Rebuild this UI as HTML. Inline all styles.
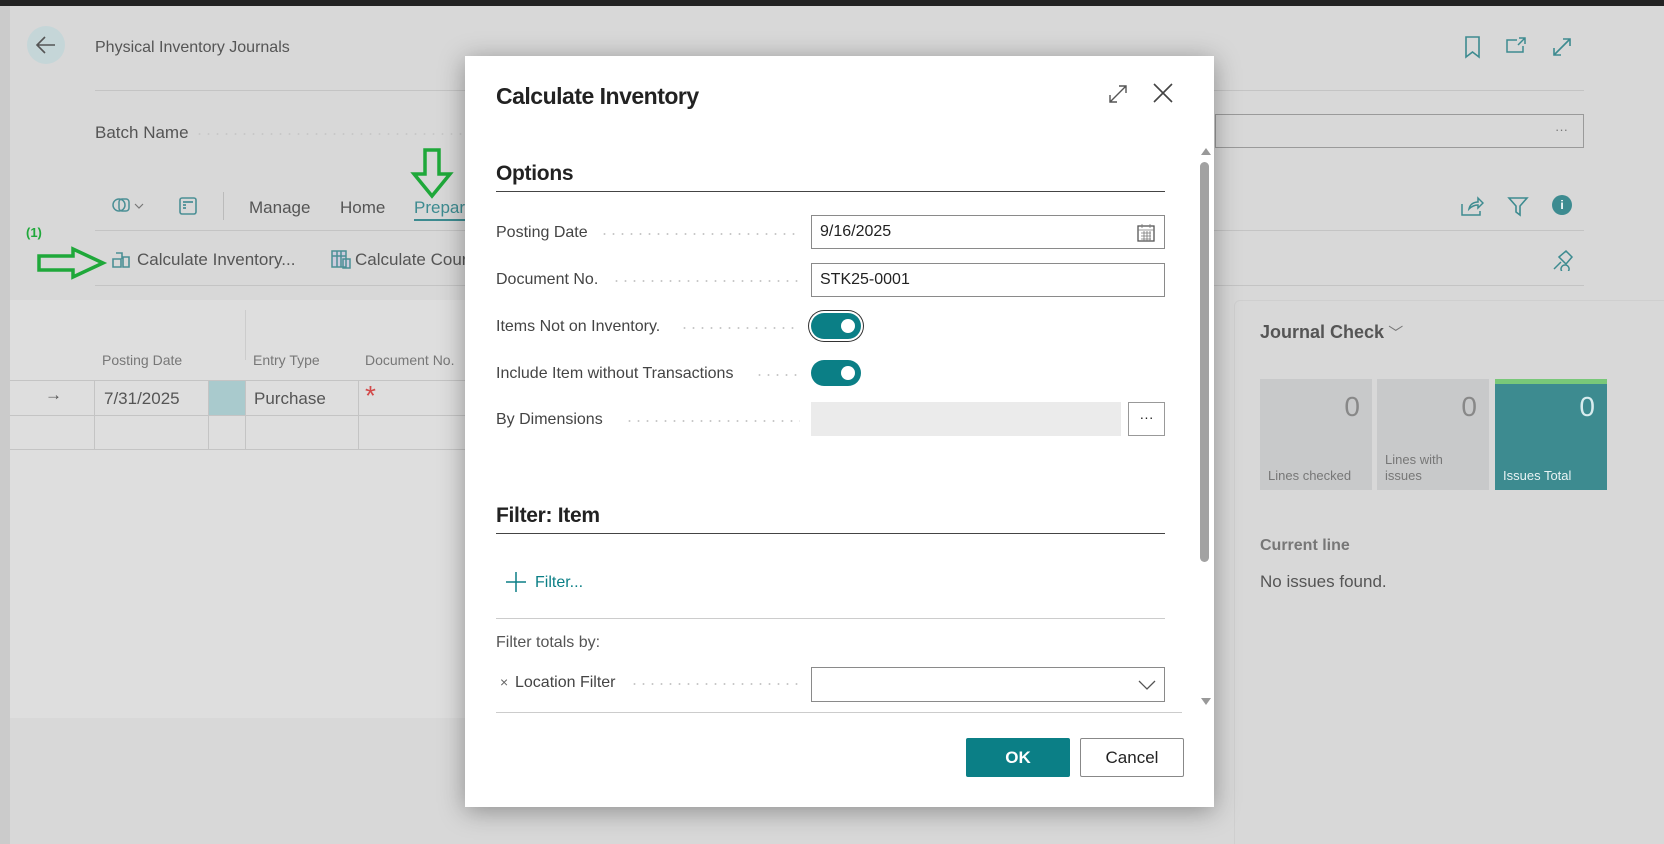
<!DOCTYPE html>
<html><head><meta charset="utf-8"><style>
*{margin:0;padding:0;box-sizing:border-box}
body{width:1664px;height:844px;overflow:hidden;background:#d8d8d8;font-family:"Liberation Sans",sans-serif;position:relative;color:#444}
.a{position:absolute;white-space:nowrap}
.bg{color:#555;font-size:16px}
.hl{position:absolute;height:1px;background:#c4c4c4}
.lbl{position:absolute;left:31px;font-size:16px;color:#444;white-space:nowrap}
.dots{position:absolute;height:2px;background-image:radial-gradient(circle,#c8c8c8 0.9px,transparent 1.1px);background-size:9px 2px}
.inp{position:absolute;left:346px;width:354px;height:34px;border:1px solid #8a8a8a;background:#fff;font-size:16px;color:#222;padding:7px 8px}
.tg{position:absolute;left:346px;width:50px;height:26px;border-radius:13px;background:#0b7f86}
.tg:after{content:"";position:absolute;right:6px;top:6px;width:14px;height:14px;border-radius:50%;background:#fff}
.tile{position:absolute;top:379px;width:112px;height:111px;background:#c8c9ca;color:#777}
.tile .n{position:absolute;right:12px;top:12px;font-size:28px;color:#888}
.tile .t{position:absolute;left:8px;bottom:6px;width:90px;font-size:13px;line-height:16px;white-space:normal}
</style></head><body>
<div class="a" style="left:0;top:0;width:1664px;height:6px;background:#222"></div>
<div class="a" style="left:0;top:6px;width:10px;height:838px;background:#cbcbcb"></div>
<div class="a" style="left:10px;top:300px;width:455px;height:418px;background:#dedede"></div>
<!-- header -->
<div class="a" style="left:27px;top:26px;width:38px;height:38px;border-radius:50%;background:#c5d6d8"></div>
<svg class="a" style="left:35px;top:34px" width="22" height="22" viewBox="0 0 22 22"><path d="M20 11H3M10 3L2 11l8 8" fill="none" stroke="#555" stroke-width="1.6"/></svg>
<div class="a bg" style="left:95px;top:39px">Physical Inventory Journals</div>
<div class="hl" style="left:95px;top:90px;width:1489px"></div>
<div class="a bg" style="left:95px;top:123px;font-size:17px">Batch Name</div>
<div class="dots" style="left:195px;top:133px;width:270px"></div>
<div class="a" style="left:1215px;top:114px;width:369px;height:34px;border:1px solid #9a9a9a"></div>
<div class="a" style="left:1555px;top:122px;color:#777;font-size:13px">···</div>
<!-- top right icons -->
<svg class="a" style="left:1463px;top:35px" width="20" height="24"><path d="M3 2h13v20l-6.5-5L3 22z" fill="none" stroke="#3d8b90" stroke-width="1.6"/></svg>
<svg class="a" style="left:1505px;top:36px" width="22" height="18"><path d="M12 4H2v12h16v-6M14 2h6v6M20 2l-7 7" fill="none" stroke="#3d8b90" stroke-width="1.5"/></svg>
<svg class="a" style="left:1551px;top:36px" width="22" height="22"><path d="M3 19L19 3M12 3h7v7M3 12v7h7" fill="none" stroke="#3d8b90" stroke-width="1.6"/></svg>
<!-- toolbar -->
<svg class="a" style="left:111px;top:196px" width="34" height="20"><circle cx="8" cy="9" r="6" fill="none" stroke="#4b8f95" stroke-width="1.5"/><rect x="8" y="3" width="10" height="12" rx="3" fill="none" stroke="#4b8f95" stroke-width="1.5"/><path d="M24 8l4 4 4-4" fill="none" stroke="#777" stroke-width="1.2"/></svg>
<svg class="a" style="left:178px;top:196px" width="20" height="20"><rect x="2" y="2" width="16" height="16" rx="2" fill="none" stroke="#4b8f95" stroke-width="1.6"/><path d="M5 6h10M5 9h3M5 12h3" stroke="#4b8f95" stroke-width="1.8"/></svg>
<div class="a" style="left:223px;top:192px;width:1px;height:28px;background:#bbb"></div>
<div class="a bg" style="left:249px;top:198px;font-size:17px">Manage</div>
<div class="a bg" style="left:340px;top:198px;font-size:17px">Home</div>
<div class="a" style="left:414px;top:198px;font-size:17px;color:#3d8b90">Prepar</div>
<div class="a" style="left:414px;top:219px;width:51px;height:2px;background:#3d8b90"></div>
<svg class="a" style="left:410px;top:148px" width="46" height="52"><path d="M15 2h14v24h11L22 48 4 26h11z" fill="none" stroke="#1fa83a" stroke-width="3.5"/></svg>
<div class="hl" style="left:95px;top:230px;width:1489px"></div>
<div class="a" style="left:26px;top:225px;color:#1fa83a;font-weight:bold;font-size:13px">(1)</div>
<svg class="a" style="left:36px;top:246px" width="72" height="34"><path d="M3 10h34V3l30 14-30 14v-7H3z" fill="none" stroke="#1fa83a" stroke-width="3.5"/></svg>
<svg class="a" style="left:111px;top:249px" width="20" height="20"><path d="M2 10h8v8H2zM5 4h6v6M12 8h6v10h-6z" fill="none" stroke="#4b8f95" stroke-width="1.6"/></svg>
<div class="a bg" style="left:137px;top:250px;font-size:17px">Calculate Inventory...</div>
<svg class="a" style="left:331px;top:249px" width="20" height="20"><path d="M1 2h14v16H1zM1 7h14M6 2v16M10 2v16M12 10h7v9h-7z" fill="#ccd" stroke="#4b8f95" stroke-width="1.5"/></svg>
<div class="a bg" style="left:355px;top:250px;font-size:17px">Calculate Cour</div>
<svg class="a" style="left:1460px;top:195px" width="24" height="22"><path d="M2 9v11h18v-4M9 14c1-5 5-7 9-7V3l5 5-5 5V10c-3 0-6 1-9 4z" fill="none" stroke="#3d8b90" stroke-width="1.5"/></svg>
<svg class="a" style="left:1507px;top:195px" width="22" height="22"><path d="M2 3h18l-7 8v9l-4-3v-6z" fill="none" stroke="#3d8b90" stroke-width="1.6"/></svg>
<div class="a" style="left:1552px;top:195px;width:20px;height:20px;border-radius:50%;background:#3d8b90;color:#fff;font-size:12px;text-align:center;line-height:20px;font-weight:bold">i</div>
<svg class="a" style="left:1551px;top:249px" width="24" height="22"><path d="M3 20l7-7M8 8l7-6 6 6-6 7zM14 16a4 4 0 1 0 .1 0" fill="none" stroke="#3d8b90" stroke-width="1.5"/></svg>
<div class="hl" style="left:95px;top:285px;width:1489px"></div>
<!-- table -->
<div class="a" style="left:245px;top:310px;width:1px;height:50px;background:#ccc"></div>
<div class="a" style="left:102px;top:352px;font-size:14px;color:#777">Posting Date</div>
<div class="a" style="left:253px;top:352px;font-size:14px;color:#777">Entry Type</div>
<div class="a" style="left:365px;top:352px;font-size:14px;color:#777">Document No.</div>
<div class="hl" style="left:10px;top:380px;width:455px"></div>
<div class="hl" style="left:10px;top:415px;width:455px"></div>
<div class="hl" style="left:10px;top:449px;width:455px"></div>
<div class="a" style="left:208px;top:381px;width:37px;height:34px;background:#a9cacd"></div>
<div class="a" style="left:94px;top:381px;width:1px;height:68px;background:#c4c4c4"></div>
<div class="a" style="left:208px;top:381px;width:1px;height:68px;background:#c4c4c4"></div>
<div class="a" style="left:245px;top:381px;width:1px;height:68px;background:#c4c4c4"></div>
<div class="a" style="left:358px;top:381px;width:1px;height:68px;background:#c4c4c4"></div>
<div class="a bg" style="left:45px;top:385px;font-size:17px">→</div>
<div class="a bg" style="left:104px;top:389px;font-size:17px">7/31/2025</div>
<div class="a bg" style="left:254px;top:389px;font-size:17px">Purchase</div>
<div class="a" style="left:365px;top:380px;font-size:28px;color:#d24a4a">*</div>
<!-- right panel -->
<div class="a" style="left:1234px;top:300px;width:430px;height:544px;border:1px solid #cfcfcf;border-right:none;border-bottom:none;border-radius:6px 0 0 0"></div>
<div class="a" style="left:1260px;top:322px;font-size:18px;font-weight:bold;color:#555">Journal Check<span style="font-weight:normal;color:#777;font-size:15px"> ﹀</span></div>
<div class="tile" style="left:1260px"><div class="n">0</div><div class="t">Lines checked</div></div>
<div class="tile" style="left:1377px"><div class="n">0</div><div class="t">Lines with issues</div></div>
<div class="tile" style="left:1495px;width:112px;background:#3d8b90;border-top:5px solid #79c879"><div class="n" style="color:#d8ecee;top:7px">0</div><div class="t" style="color:#e8f3f4">Issues Total</div></div>
<div class="a" style="left:1260px;top:537px;font-size:16px;font-weight:bold;color:#777">Current line</div>
<div class="a" style="left:1260px;top:572px;font-size:17px;color:#555">No issues found.</div>
<!-- dialog -->
<div class="a" style="left:465px;top:56px;width:749px;height:751px;background:#fff;box-shadow:0 4px 24px rgba(0,0,0,.35)">
 <div class="a" style="left:31px;top:27px;font-size:23px;font-weight:bold;color:#222;letter-spacing:-.5px">Calculate Inventory</div>
 <svg class="a" style="left:642px;top:27px" width="22" height="22"><path d="M3 19L19 3M12 3h7v7M3 12v7h7" fill="none" stroke="#555" stroke-width="1.4"/></svg>
 <svg class="a" style="left:687px;top:26px" width="22" height="22"><path d="M2 2l18 18M20 2L2 20" stroke="#444" stroke-width="1.6"/></svg>
 <div class="a" style="left:31px;top:106px;font-size:21px;font-weight:bold;color:#222;letter-spacing:-.3px">Options</div>
 <div class="a" style="left:31px;top:135px;width:669px;height:1px;background:#444"></div>
 <div class="lbl" style="top:168px">Posting Date</div><div class="dots" style="left:135px;top:177px;width:200px"></div>
 <div class="inp" style="top:159px">9/16/2025</div>
 <svg class="a" style="left:671px;top:167px" width="20" height="20"><rect x="2" y="3" width="16" height="15" fill="none" stroke="#555" stroke-width="1.3"/><path d="M2 7h16M6 1v4M14 1v4M5 10h10M5 13h10M5 16h10M8 8v10M11 8v10M14 8v10" stroke="#777" stroke-width=".8"/></svg>
 <div class="lbl" style="top:215px">Document No.</div><div class="dots" style="left:147px;top:224px;width:188px"></div>
 <div class="inp" style="top:207px">STK25-0001</div>
 <div class="lbl" style="top:262px">Items Not on Inventory.</div><div class="dots" style="left:215px;top:271px;width:120px"></div>
 <div class="tg" style="top:257px;box-shadow:0 0 0 2px #fff,0 0 0 3px #333"></div>
 <div class="lbl" style="top:309px">Include Item without Transactions</div><div class="dots" style="left:290px;top:318px;width:45px"></div>
 <div class="tg" style="top:304px"></div>
 <div class="lbl" style="top:355px">By Dimensions</div><div class="dots" style="left:160px;top:364px;width:175px"></div>
 <div class="a" style="left:346px;top:346px;width:310px;height:34px;background:#ebebeb"></div>
 <div class="a" style="left:663px;top:346px;width:37px;height:34px;border:1px solid #999;text-align:center;font-size:14px;line-height:28px;color:#222">···</div>
 <div class="a" style="left:31px;top:448px;font-size:21px;font-weight:bold;color:#222;letter-spacing:-.3px">Filter: Item</div>
 <div class="a" style="left:31px;top:477px;width:669px;height:1px;background:#444"></div>
 <svg class="a" style="left:41px;top:516px" width="20" height="20"><path d="M10 0v20M0 10h20" stroke="#0b7f86" stroke-width="1.5"/></svg>
 <div class="a" style="left:70px;top:518px;font-size:16px;color:#0b7f86">Filter...</div>
 <div class="a" style="left:31px;top:562px;width:669px;height:1px;background:#ccc"></div>
 <div class="lbl" style="top:578px;color:#555">Filter totals by:</div>
 <div class="lbl" style="top:618px;left:35px;font-size:14px;color:#666">×</div>
 <div class="lbl" style="top:618px;left:50px">Location Filter</div><div class="dots" style="left:165px;top:627px;width:170px"></div>
 <div class="inp" style="top:611px;height:35px"></div>
 <svg class="a" style="left:673px;top:623px" width="18" height="12"><path d="M1 2l8 8 8-8" fill="none" stroke="#555" stroke-width="1.3"/></svg>
 <div class="a" style="left:31px;top:656px;width:686px;height:1px;background:#ccc"></div>
 <div class="a" style="left:501px;top:682px;width:104px;height:39px;background:#0b7f86;color:#fff;font-weight:bold;font-size:17px;text-align:center;line-height:39px;border-radius:2px">OK</div>
 <div class="a" style="left:615px;top:682px;width:104px;height:39px;border:1px solid #888;color:#222;font-size:17px;text-align:center;line-height:37px;border-radius:2px">Cancel</div>
 <svg class="a" style="left:735px;top:90px" width="12" height="10"><path d="M1 9L6 2l5 7z" fill="#999"/></svg>
 <div class="a" style="left:735px;top:106px;width:9px;height:400px;border-radius:5px;background:#a2a2a2"></div>
 <svg class="a" style="left:735px;top:641px" width="12" height="10"><path d="M1 1h10L6 8z" fill="#999"/></svg>
</div>
</body></html>
